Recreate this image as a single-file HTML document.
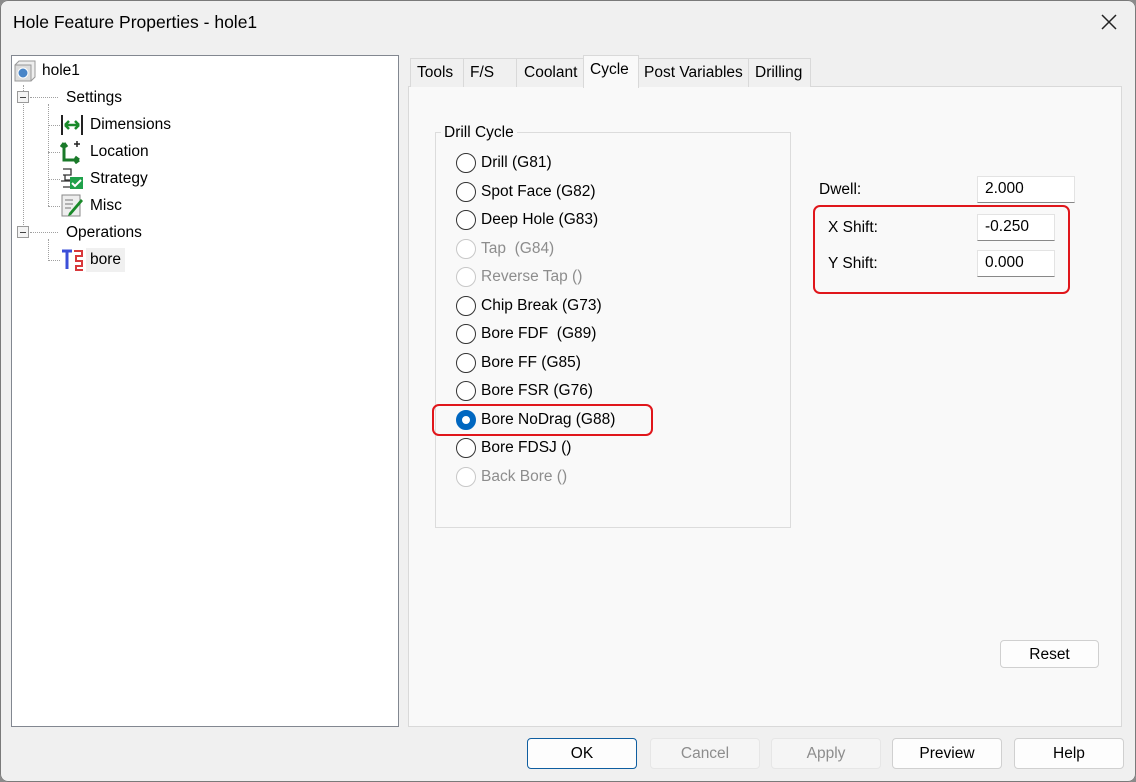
<!DOCTYPE html>
<html><head><style>
*{box-sizing:border-box;margin:0;padding:0}
body{width:1136px;height:782px;background:#8a8a8a;font-family:"Liberation Sans",sans-serif;font-size:15px;color:#000;position:relative;overflow:hidden}
.win{position:absolute;left:0;top:0;width:1136px;height:782px;background:#f0f0f0;border-radius:8px;overflow:hidden}
.frame{position:absolute;left:0;top:0;width:1136px;height:782px;border:1px solid #7a7a7a;border-radius:8px}
.a{position:absolute;white-space:nowrap}
.title{left:13px;top:12px;font-size:17.5px}
.tree{left:11px;top:55px;width:388px;height:672px;background:#fff;border:1px solid #828790}
.pane{left:408px;top:86px;width:714px;height:641px;background:#f9f9f9;border:1px solid #d9d9d9}
.tab{top:58px;height:29px;border:1px solid #d9d9d9;border-bottom:none;background:#f0f0f0;padding:5px 0 0 6px;font-size:15.5px}
.tab.sel{top:55px;height:33px;background:#f9f9f9;padding-top:5px}
.grp{left:435px;top:132px;width:356px;height:396px;border:1px solid #dcdcdc}
.rad{width:20px;height:20px;border:1px solid #333;border-radius:50%;background:#fff}
.rad.dis{border-color:#c8c8c8}
.lbl{font-size:15.5px}
.dis2{color:#8d8d8d}
.inp{background:#fff;border:1px solid #e3e3e3;border-bottom:1px solid #888;padding:3px 0 0 7px;font-size:15.5px}
.btn{top:738px;height:31px;width:110px;border:1px solid #d0d0d0;border-radius:4px;background:#fdfdfd;text-align:center;padding-top:6px;font-size:15.5px}
.red{border:2px solid #e0161b;border-radius:7px}
.dot{border-left:1px dotted #a0a0a0}
.hd{border-top:1px dotted #a0a0a0}
.box{width:12px;height:12px;border:1px solid #9a9a9a;background:#f4f4f4}
</style></head><body><div class="win">
<div class="a title">Hole Feature Properties - hole1</div>
<svg class="a" style="left:1100px;top:13px" width="18" height="18"><path d="M2 2L16 16M16 2L2 16" stroke="#222" stroke-width="1.5"/></svg>

<div class="a tree"></div>
<svg class="a" style="left:13px;top:59px" width="24" height="24"><path d="M2 6l4-4h16v16l-4 4" fill="#eee" stroke="#999"/><rect x="2" y="6" width="16" height="16" fill="#ddd" stroke="#999"/><circle cx="10" cy="14" r="5" fill="#4a86c8" stroke="#fff"/></svg>
<div class="a lbl" style="left:42px;top:62px">hole1</div>
<div class="a dot" style="left:23px;top:85px;height:148px"></div>
<div class="a box" style="left:17px;top:91px"></div><div class="a" style="left:20px;top:97px;width:6px;height:1px;background:#444"></div>
<div class="a hd" style="left:30px;top:97px;width:28px"></div>
<div class="a lbl" style="left:66px;top:89px">Settings</div>
<div class="a dot" style="left:48px;top:104px;height:102px"></div>
<div class="a hd" style="left:48px;top:125px;width:12px"></div>
<div class="a hd" style="left:48px;top:152px;width:12px"></div>
<div class="a hd" style="left:48px;top:179px;width:12px"></div>
<div class="a hd" style="left:48px;top:206px;width:12px"></div>
<svg class="a" style="left:60px;top:114px" width="24" height="22"><path d="M2 1v20M22 1v20" stroke="#222" stroke-width="2"/><path d="M5 11h14M5 11l4-4M5 11l4 4M19 11l-4-4M19 11l-4 4" stroke="#1a8a2a" stroke-width="2.5" fill="none"/></svg>
<div class="a lbl" style="left:90px;top:116px">Dimensions</div>
<svg class="a" style="left:60px;top:140px" width="24" height="24"><path d="M4 3v17h15M4 3l-3 4M4 3l3 4M19 20l-4-3M19 20l-4 3" stroke="#1a7a2a" stroke-width="3" fill="none"/><path d="M14 4h6M17 1v6" stroke="#222" stroke-width="1.5"/></svg>
<div class="a lbl" style="left:90px;top:143px">Location</div>
<svg class="a" style="left:60px;top:167px" width="24" height="24"><path d="M3 2h8v6h-8M5 8v5h8M1 14h10M3 20h8" stroke="#333" stroke-width="1.3" fill="none"/><rect x="10" y="10" width="13" height="12" fill="#1fa14a"/><path d="M12 16l3 3 6-6" stroke="#fff" stroke-width="2" fill="none"/></svg>
<div class="a lbl" style="left:90px;top:170px">Strategy</div>
<svg class="a" style="left:60px;top:193px" width="24" height="24"><rect x="2" y="2" width="18" height="21" fill="#eee" stroke="#888"/><path d="M5 7h8M5 11h8M5 15h6" stroke="#777"/><path d="M9 20l12-14 2 2-12 14-3 1z" fill="#1a8a2a"/></svg>
<div class="a lbl" style="left:90px;top:197px">Misc</div>
<div class="a box" style="left:17px;top:226px"></div><div class="a" style="left:20px;top:232px;width:6px;height:1px;background:#444"></div>
<div class="a hd" style="left:30px;top:232px;width:28px"></div>
<div class="a lbl" style="left:66px;top:224px">Operations</div>
<div class="a dot" style="left:48px;top:239px;height:22px"></div>
<div class="a hd" style="left:48px;top:260px;width:12px"></div>
<svg class="a" style="left:60px;top:248px" width="24" height="24"><path d="M2 3h10M7 3v18" stroke="#3b4fd8" stroke-width="3"/><path d="M14 3h8v5h-6v5h6v5h-6v4h7" stroke="#d8383b" stroke-width="2" fill="none"/></svg>
<div class="a lbl" style="left:86px;top:248px;background:#f0f0f0;padding:3px 4px;height:24px">bore</div>

<div class="a pane"></div>
<div class="a tab" style="left:410px;width:54px">Tools</div>
<div class="a tab" style="left:463px;width:54px">F/S</div>
<div class="a tab" style="left:516px;width:68px;padding-left:7px">Coolant</div>
<div class="a tab" style="left:638px;width:111px;padding-left:5px">Post Variables</div>
<div class="a tab" style="left:748px;width:63px">Drilling</div>
<div class="a tab sel" style="left:583px;width:56px">Cycle</div>

<div class="a grp"></div>
<div class="a lbl" style="left:441px;top:124px;background:#f9f9f9;padding:0 3px">Drill Cycle</div>

<div class="a rad" style="left:456px;top:153px"></div><div class="a lbl" style="left:481px;top:154px">Drill (G81)</div>
<div class="a rad" style="left:456px;top:182px"></div><div class="a lbl" style="left:481px;top:183px">Spot Face (G82)</div>
<div class="a rad" style="left:456px;top:210px"></div><div class="a lbl" style="left:481px;top:211px">Deep Hole (G83)</div>
<div class="a rad dis" style="left:456px;top:239px"></div><div class="a lbl dis2" style="left:481px;top:240px">Tap&nbsp; (G84)</div>
<div class="a rad dis" style="left:456px;top:267px"></div><div class="a lbl dis2" style="left:481px;top:268px">Reverse Tap ()</div>
<div class="a rad" style="left:456px;top:296px"></div><div class="a lbl" style="left:481px;top:297px">Chip Break (G73)</div>
<div class="a rad" style="left:456px;top:324px"></div><div class="a lbl" style="left:481px;top:325px">Bore FDF&nbsp; (G89)</div>
<div class="a rad" style="left:456px;top:353px"></div><div class="a lbl" style="left:481px;top:354px">Bore FF (G85)</div>
<div class="a rad" style="left:456px;top:381px"></div><div class="a lbl" style="left:481px;top:382px">Bore FSR (G76)</div>
<div class="a rad" style="left:456px;top:410px;background:#fff;border:6px solid #0067c0"></div><div class="a lbl" style="left:481px;top:411px">Bore NoDrag (G88)</div>
<div class="a rad" style="left:456px;top:438px"></div><div class="a lbl" style="left:481px;top:439px">Bore FDSJ ()</div>
<div class="a rad dis" style="left:456px;top:467px"></div><div class="a lbl dis2" style="left:481px;top:468px">Back Bore ()</div>
<div class="a red" style="left:432px;top:404px;width:221px;height:32px"></div>

<div class="a lbl" style="left:819px;top:181px">Dwell:</div>
<div class="a inp" style="left:977px;top:176px;width:98px;height:27px">2.000</div>
<div class="a lbl" style="left:828px;top:219px">X Shift:</div>
<div class="a inp" style="left:977px;top:214px;width:78px;height:27px">-0.250</div>
<div class="a lbl" style="left:828px;top:255px">Y Shift:</div>
<div class="a inp" style="left:977px;top:250px;width:78px;height:27px">0.000</div>
<div class="a red" style="left:813px;top:205px;width:257px;height:89px"></div>

<div class="a btn" style="left:1000px;top:640px;width:99px;height:28px;padding-top:5px">Reset</div>

<div class="a btn" style="left:527px;border-color:#0f5ea0">OK</div>
<div class="a btn" style="left:650px;background:#f5f5f5;border-color:#e6e6e6;color:#8d8d8d">Cancel</div>
<div class="a btn" style="left:771px;background:#f5f5f5;border-color:#e6e6e6;color:#8d8d8d">Apply</div>
<div class="a btn" style="left:892px">Preview</div>
<div class="a btn" style="left:1014px">Help</div>
</div><div class="frame"></div></body></html>
